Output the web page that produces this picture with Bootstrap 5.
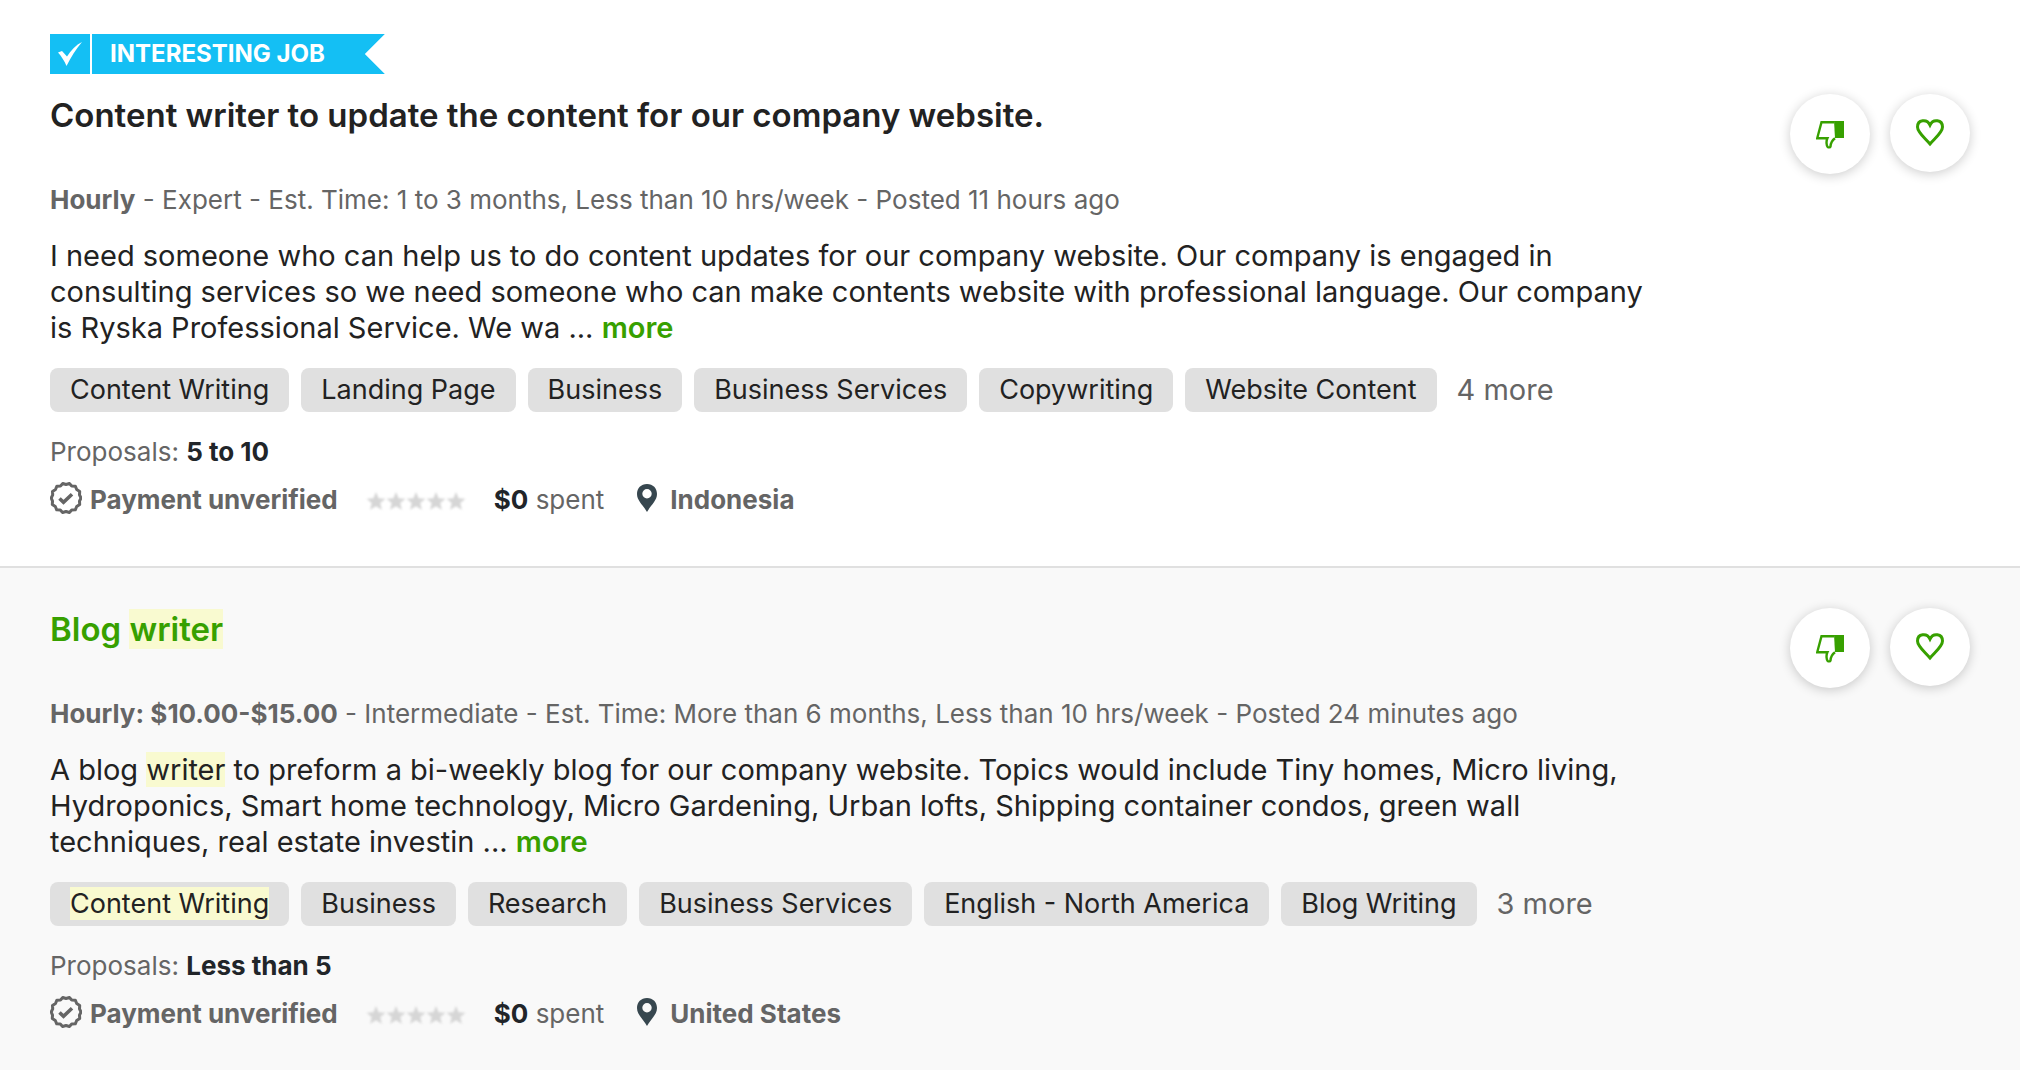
<!DOCTYPE html>
<html lang="en">
<head>
<meta charset="utf-8">
<meta name="viewport" content="width=device-width, initial-scale=1">
<title>Job search results</title>
<link href="https://cdn.jsdelivr.net/npm/bootstrap@5.3.0/dist/css/bootstrap.min.css" rel="stylesheet">
<style>
  body { font-family: Inter, "Open Sans", sans-serif; font-size: 26px; line-height: 36px; color: #222; background: #f9f9f9; }
  .job { padding: 34px 50px 48px; background: #fff; border-bottom: 2px solid #e0e0e0; }
  .job-alt { padding-top: 40px; background: #f9f9f9; border-bottom: 0; }
  .ribbon { height: 40px; gap: 2px; color: #fff; font-size: 24px; font-weight: 700; line-height: 40px; }
  .ribbon-check { width: 40px; background: #14bff4; }
  .ribbon-label { padding: 0 60px 0 18px; background: #14bff4; clip-path: polygon(0 0, 100% 0, calc(100% - 20px) 50%, 100% 100%, 0 100%); }
  .job-top { height: 80px; margin-top: 20px; }
  .job-alt .job-top { margin-top: 0; }
  .job-title { font-size: 33px; font-weight: 600; line-height: 42px; }
  .job-title a, .more-link { color: #37a000; font-weight: 600; text-decoration: none; }
  .hit { padding: 0; color: inherit; background: #f9fad0; }
  .actions { gap: 20px; }
  .round-btn { width: 80px; height: 80px; border: 0; border-radius: 50%; background: #fff; box-shadow: 0 2px 12px rgba(0,0,0,.2); padding: 0 0 2px; }
  .round-btn-short { height: 78px; padding-bottom: 4px; }
  .soft { color: #656565; }
  .job-meta { margin-top: 8px; }
  .job-text { max-width: 1660px; margin-top: 20px; font-size: 29px; }
  .tag-row { gap: 12px; margin-top: 22px; }
  .tag { padding: 0 20px; border-radius: 8px; background: #e0e0e0; color: #222; font-size: 27px; line-height: 44px; text-decoration: none; }
  .tag-more { font-size: 29px; }
  .proposals { margin-top: 22px; }
  .client-row { margin-top: 12px; }
  .client-item { margin-left: 28px; }
  .client-icon { margin-bottom: 4px; }
  .stars { filter: blur(1px); margin-top: 2px; }
  b { font-weight: 700; }
</style>
<script src="https://cdn.jsdelivr.net/npm/bootstrap@5.3.0/dist/js/bootstrap.bundle.min.js"></script>
</head>
<body>
<svg class="d-none" xmlns="http://www.w3.org/2000/svg">
  <symbol id="i-down" viewBox="0 0 28 28"><path d="M18 1.200H5.500L1.200 17.300h10.200c-1.500 3-.8 7.500.2 8.500 1 .9 2.500.8 2.900-.3.200-4 1.500-6 4.500-8.200" fill="none" stroke="#37a000" stroke-width="2.400"/><path d="M18 0h10v17h-9z" fill="#37a000"/></symbol>
  <symbol id="i-heart" viewBox="0 0 28 28"><path d="M14 25C9 19 1.500 13.500 1.500 8c0-7.500 9.500-8.500 12.500-2 3-6.500 12.500-5.500 12.500 2 0 5.500-7.500 11-12.500 17z" fill="none" stroke="#37a000" stroke-width="3"/></symbol>
  <symbol id="i-badge" viewBox="0 0 32 32"><path d="M16 2.500l3.400-1 2.300 2.600 3.600.1 1.400 3.300 3 1.900-.2 3.500 1.500 3.100-1.500 3.100.2 3.500-3 1.900-1.400 3.300-3.600.1-2.300 2.600-3.400-1-3.400 1-2.300-2.600-3.600-.1-1.400-3.300-3-1.900.2-3.500L1.200 16l1.500-3.100-.2-3.500 3-1.900 1.400-3.300 3.600-.1 2.300-2.600z" fill="none" stroke="#656565" stroke-width="3" stroke-linejoin="round"/><path d="M9.500 16.500l4 3.800 8.500-8" fill="none" stroke="#656565" stroke-width="3.600"/></symbol>
  <symbol id="i-stars" viewBox="0 0 100 18"><g fill="#d6d6d6"><path id="st" d="M10 0l2.600 6.200 6.900.5-5.200 4.400 1.600 6.700-5.900-3.600-5.900 3.600 1.600-6.700L.5 6.700l6.900-.5z"/><use href="#st" x="20"/><use href="#st" x="40"/><use href="#st" x="60"/><use href="#st" x="80"/></g></symbol>
  <symbol id="i-pin" viewBox="0 0 20 28"><path fill-rule="evenodd" d="M10 0C4 0 0 4.300 0 10c0 6.500 6 11 10 18 4-7 10-11.500 10-18 0-5.700-4-10-10-10zm0 5a4.700 4.700 0 1 1 0 9.400A4.700 4.700 0 0 1 10 5z" fill="#37474f"/></symbol>
</svg>
<main>
<article class="job">
  <div class="ribbon d-flex">
    <span class="ribbon-check d-flex align-items-center justify-content-center"><svg width="26" height="26" viewBox="0 0 26 26"><path d="M1 11.500l4-1.500 5 5.500C14 9 19 4 25 1 19 8 14 16 9.500 25 7.500 20 4.500 15.500 1 11.500z" fill="#fff"/></svg></span>
    <span class="ribbon-label">INTERESTING JOB</span>
  </div>
  <div class="job-top d-flex justify-content-between">
    <h2 class="job-title mb-0">Content writer to update the content for our company website.</h2>
    <div class="actions d-flex align-items-start">
      <button class="round-btn" type="button" aria-label="Not interested"><svg width="28" height="28"><use href="#i-down"/></svg></button>
      <button class="round-btn round-btn-short" type="button" aria-label="Save job"><svg width="28" height="28"><use href="#i-heart"/></svg></button>
    </div>
  </div>
  <div class="job-meta soft"><b>Hourly</b> - Expert - Est. Time: 1 to 3 months, Less than 10 hrs/week - Posted 11 hours ago</div>
  <p class="job-text mb-0">I need someone who can help us to do content updates for our company website. Our company is engaged in<br>consulting services so we need someone who can make contents website with professional language. Our company<br>is Ryska Professional Service. We wa ... <a class="more-link" href="#">more</a></p>
  <div class="tag-row d-flex flex-wrap align-items-center">
    <a class="tag" href="#">Content Writing</a><a class="tag" href="#">Landing Page</a><a class="tag" href="#">Business</a><a class="tag" href="#">Business Services</a><a class="tag" href="#">Copywriting</a><a class="tag" href="#">Website Content</a><span class="tag-more soft ms-2">4 more</span>
  </div>
  <div class="proposals soft">Proposals: <b class="text-dark">5 to 10</b></div>
  <div class="client-row soft d-flex align-items-center">
    <svg class="client-icon" width="32" height="32"><use href="#i-badge"/></svg><b class="ms-2">Payment unverified</b>
    <svg class="client-item stars" width="100" height="18"><use href="#i-stars"/></svg>
    <span class="client-item"><b class="text-dark">$0</b> spent</span>
    <svg class="client-item client-icon" width="30" height="28"><use href="#i-pin"/></svg><b class="ms-2">Indonesia</b>
  </div>
</article>
<article class="job job-alt">
  <div class="job-top d-flex justify-content-between">
    <h2 class="job-title mb-0"><a href="#">Blog <mark class="hit">writer</mark></a></h2>
    <div class="actions d-flex align-items-start">
      <button class="round-btn" type="button" aria-label="Not interested"><svg width="28" height="28"><use href="#i-down"/></svg></button>
      <button class="round-btn round-btn-short" type="button" aria-label="Save job"><svg width="28" height="28"><use href="#i-heart"/></svg></button>
    </div>
  </div>
  <div class="job-meta soft"><b>Hourly: $10.00-$15.00</b> - Intermediate - Est. Time: More than 6 months, Less than 10 hrs/week - Posted 24 minutes ago</div>
  <p class="job-text mb-0">A blog <mark class="hit">writer</mark> to preform a bi-weekly blog for our company website. Topics would include Tiny homes, Micro living,<br>Hydroponics, Smart home technology, Micro Gardening, Urban lofts, Shipping container condos, green wall<br>techniques, real estate investin ... <a class="more-link" href="#">more</a></p>
  <div class="tag-row d-flex flex-wrap align-items-center">
    <a class="tag" href="#"><mark class="hit">Content Writing</mark></a><a class="tag" href="#">Business</a><a class="tag" href="#">Research</a><a class="tag" href="#">Business Services</a><a class="tag" href="#">English - North America</a><a class="tag" href="#">Blog Writing</a><span class="tag-more soft ms-2">3 more</span>
  </div>
  <div class="proposals soft">Proposals: <b class="text-dark">Less than 5</b></div>
  <div class="client-row soft d-flex align-items-center">
    <svg class="client-icon" width="32" height="32"><use href="#i-badge"/></svg><b class="ms-2">Payment unverified</b>
    <svg class="client-item stars" width="100" height="18"><use href="#i-stars"/></svg>
    <span class="client-item"><b class="text-dark">$0</b> spent</span>
    <svg class="client-item client-icon" width="30" height="28"><use href="#i-pin"/></svg><b class="ms-2">United States</b>
  </div>
</article>
</main>
</body>
</html>
